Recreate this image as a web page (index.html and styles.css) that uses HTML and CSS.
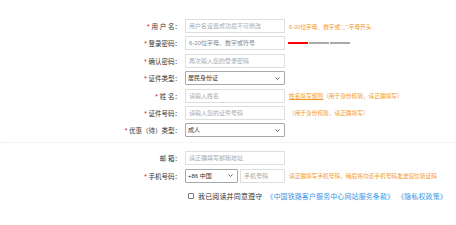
FILE: index.html
```html
<!DOCTYPE html>
<html>

<head>
    <title>注册</title>
    <link rel="stylesheet" href="styles.css">
</head>

<body>
    <!--注册表单-->
    <div class="reg-form">
        <div class="form-row">
            <label class="form-label"><span class="req">*</span> 用 户 名：</label>
            <input class="form-input" type="text" placeholder="用户名设置成功后不可修改">
            <span class="form-tip">6-30位字母、数字或“_”,字母开头</span>
        </div>
        <div class="form-row">
            <label class="form-label"><span class="req">*</span> 登录密码：</label>
            <input class="form-input dark-ph" type="password" placeholder="6-20位字母、数字或符号">
            <div class="pwd-strength">
                <span class="bar bar-on"></span>
                <span class="bar"></span>
                <span class="bar"></span>
            </div>
        </div>
        <div class="form-row">
            <label class="form-label"><span class="req">*</span> 确认密码：</label>
            <input class="form-input" type="password" placeholder="再次输入您的登录密码">
        </div>
        <div class="form-row">
            <label class="form-label"><span class="req">*</span> 证件类型：</label>
            <select class="form-select">
                <option>居民身份证</option>
            </select>
        </div>
        <div class="form-row">
            <label class="form-label"><span class="req">*</span> 姓 名：</label>
            <input class="form-input" type="text" placeholder="请输入姓名">
            <span class="form-tip"><a href="#" class="tip-link">姓名填写规则</a>（用于身份核验，请正确填写）</span>
        </div>
        <div class="form-row">
            <label class="form-label"><span class="req">*</span> 证件号码：</label>
            <input class="form-input" type="text" placeholder="请输入您的证件号码">
            <span class="form-tip">（用于身份核验，请正确填写）</span>
        </div>
        <div class="form-row">
            <label class="form-label"><span class="req">*</span> 优惠（待）类型：</label>
            <select class="form-select">
                <option>成人</option>
            </select>
        </div>

        <div class="divider"></div>

        <div class="form-row">
            <label class="form-label">邮 箱：</label>
            <input class="form-input" type="text" placeholder="请正确填写邮箱地址">
        </div>
        <div class="form-row">
            <label class="form-label"><span class="req">*</span> 手机号码：</label>
            <select class="form-select phone-code">
                <option>+86 中国</option>
            </select>
            <input class="form-input phone-input" type="text" placeholder="手机号码">
            <span class="form-tip">请正确填写手机号码，稍后将向该手机号码发送短信验证码</span>
        </div>

        <div class="agree-row">
            <input type="checkbox" class="agree-box">
            <span class="agree-text">我已阅读并同意遵守</span>
            <a href="#" class="agree-link">《中国铁路客户服务中心网站服务条款》</a>
            <a href="#" class="agree-link">《隐私权政策》</a>
        </div>
    </div>
</body>

</html>
```

FILE: styles.css
```css
/* page */
body {
    margin: 0;
    background-color: #fff;
    font-family: "Liberation Sans", "Noto Sans CJK SC", sans-serif;
    color: #333;
}

.reg-form {
    padding-top: 19px;
}

/* rows */
.form-row {
    display: flex;
    align-items: center;
    height: 14px;
    margin-bottom: 3.4px;
}

.form-label {
    width: 185px;
    padding-right: 4px;
    box-sizing: border-box;
    text-align: right;
    font-size: 6.5px;
    color: #333;
    white-space: nowrap;
}

.req {
    color: #e60012;
}

.form-input {
    width: 100px;
    height: 14px;
    box-sizing: border-box;
    border: 1px solid #dedede;
    padding: 0 3px;
    font-size: 6px;
    font-family: "Liberation Sans", "Noto Sans CJK SC", sans-serif;
    outline: none;
}

.form-input::placeholder {
    color: #aaa;
}

.dark-ph::placeholder {
    color: #888;
}

/* select with a small chevron */
.form-select {
    appearance: none;
    width: 100px;
    height: 14px;
    box-sizing: border-box;
    border: 1px solid #a8a8a8;
    border-radius: 1px;
    padding: 0 2px;
    font-size: 6px;
    font-family: "Liberation Sans", "Noto Sans CJK SC", sans-serif;
    color: #333;
    background-color: #fff;
    background-image: url("data:image/svg+xml,%3Csvg xmlns='http://www.w3.org/2000/svg' width='5' height='3' viewBox='0 0 5 3'%3E%3Cpath d='M0.5 0.5 L2.5 2.5 L4.5 0.5' fill='none' stroke='%23555' stroke-width='0.9'/%3E%3C/svg%3E");
    background-repeat: no-repeat;
    background-position: right 4px center;
    background-size: 5px 3px;
}

.phone-code {
    width: 53px;
}

.phone-input {
    width: 45px;
    margin-left: 2px;
}

/* tips */
.form-tip {
    margin-left: 4px;
    font-size: 5.7px;
    color: #f39a2b;
    white-space: nowrap;
}

.tip-link {
    color: #f39a2b;
}

.pwd-strength {
    display: flex;
    gap: 1px;
    margin-left: 3px;
}

.bar {
    width: 20px;
    height: 2px;
    background-color: #a9a9a9;
}

.bar-on {
    background-color: #f00;
}

.divider {
    border-top: 1px dotted #e8e8e8;
    margin: 4.5px 0 8.5px 0;
}

/* agreement */
.agree-row {
    display: flex;
    align-items: center;
    padding-left: 188px;
    margin-top: 8px;
    font-size: 7px;
}

.agree-box {
    appearance: none;
    width: 6px;
    height: 6px;
    margin: 0 4px 0 0;
    border: 1px solid #777;
    border-radius: 1px;
    background-color: #fff;
}

.agree-text {
    color: #333;
    letter-spacing: 0.15px;
    margin-right: 4px;
}

.agree-link {
    color: #3a96e4;
    text-decoration: none;
    margin-right: 3px;
    letter-spacing: 0.1px;
}
```
